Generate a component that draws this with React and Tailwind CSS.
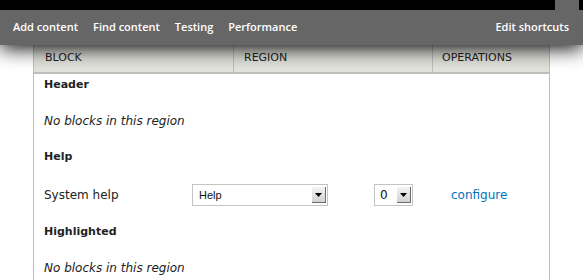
import React from 'react';

const sans = "font-['DejaVu_Sans',sans-serif]";

// native-looking select box, grey arrow button on the right
const FakeSelect = ({ value, width, textClass }) => (
    <div className={`flex h-[22px] items-center border border-[#c4c4c4] bg-white ${width}`}>
        <span className={`text-[#111] ${textClass}`}>{value}</span>
        <span className="ml-auto mr-[1px] flex h-[16px] w-[14px] items-center justify-center border-r border-b border-[#6e6e6e] bg-gradient-to-b from-[#f4f4f4] to-[#d2d2d2]">
            <svg width="7" height="4" viewBox="0 0 7 4">
                <path d="M0 0h7L3.5 4z" fill="#000" />
            </svg>
        </span>
    </div>
);

const TitleRow = ({ children }) => (
    <div className={`h-[36px] pt-[4px] pl-[10px] text-[11px] leading-[14px] font-bold text-[#222] ${sans}`}>{children}</div>
);

const EmptyRow = () => (
    <div className={`h-[36px] pt-[4px] pl-[10px] text-[12px] leading-[14px] italic text-[#222] ${sans}`}>No blocks in this region</div>
);

export default function App() {
    const links = ['Add content', 'Find content', 'Testing', 'Performance'];

    return (
        <div className="relative h-[280px] w-[583px] overflow-hidden bg-white">
            {/* toolbar */}
            <div className="relative z-10 shadow-[0_3px_20px_#000]">
                <div className="flex h-[10px] justify-end bg-black pr-[4px]">
                    <div className="w-[24px] bg-[#666]" />
                </div>
                <div className="flex h-[35px] items-center justify-between bg-[#666] pl-[13px] pr-[14px] text-[11px] font-semibold text-white font-['Open_Sans',sans-serif]">
                    <div className="flex gap-[15px]">
                        {links.map((l) => (
                            <span key={l}>{l}</span>
                        ))}
                    </div>
                    <span>Edit shortcuts</span>
                </div>
            </div>

            {/* blocks table */}
            <div className="mx-[33px]">
                <div className={`flex h-[29px] border-b-2 border-[#bebfb9] bg-[#e1e2dc] text-[11px] uppercase text-[#222] ${sans}`}>
                    <div className="flex w-[201px] items-center border-x border-[#bebfb9] pl-[11px]">Block</div>
                    <div className="flex w-[199px] items-center border-r border-[#bebfb9] pl-[10px]">Region</div>
                    <div className="flex w-[117px] items-center border-r border-[#bebfb9] pl-[9px]">Operations</div>
                </div>
                <div className="border-x border-[#bebfb9]">
                    <TitleRow>Header</TitleRow>
                    <EmptyRow />
                    <TitleRow>Help</TitleRow>
                    <div className={`flex h-[39px] items-start pt-[2px] text-[12px] text-[#222] ${sans}`}>
                        <div className="flex h-[22px] w-[158px] items-center pl-[10px]">System help</div>
                        <FakeSelect value="Help" width="w-[136px]" textClass="pl-[6px] text-[11px] font-['Liberation_Sans',sans-serif]" />
                        <div className="ml-[46px]">
                            <FakeSelect value="0" width="w-[39px]" textClass="pl-[5px] text-[12px]" />
                        </div>
                        <a className="ml-[38px] flex h-[22px] items-center text-[#0074bd]" href="#">configure</a>
                    </div>
                    <TitleRow>Highlighted</TitleRow>
                    <EmptyRow />
                </div>
            </div>
        </div>
    );
}
